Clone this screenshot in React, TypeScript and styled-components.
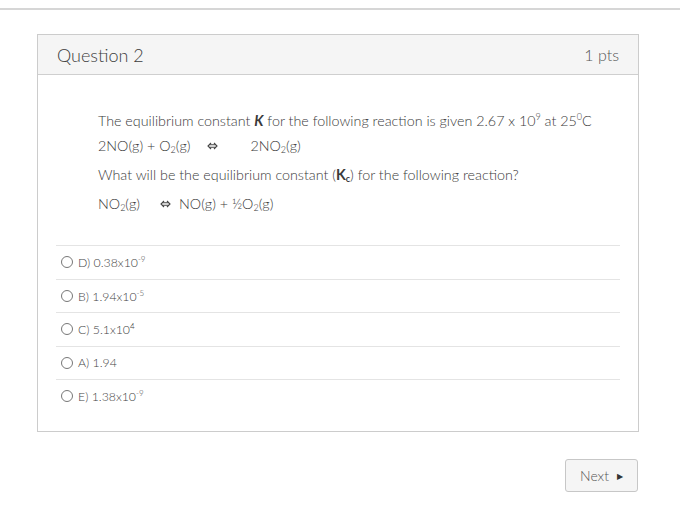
import React from "react";
import styled, { createGlobalStyle } from "styled-components";

const Global = createGlobalStyle`
  html, body { margin: 0; padding: 0; background: #fff; }
  body { font-family: Lato, "Open Sans", "Liberation Sans", sans-serif; color: #333; }
`;

const Page = styled.div`
  width: 700px;
  height: 512px;
  overflow: hidden;
  display: flex;
  flex-direction: column;
`;

const TopRule = styled.div`
  margin-top: 8px;
  width: 680px;
  height: 2px;
  background: #d6d6d6;
`;

const Card = styled.div`
  margin: 24px 0 0 37px;
  width: 600px;
  height: 396px;
  border: 1px solid #cccccc;
  display: flex;
  flex-direction: column;
`;

const Header = styled.div`
  height: 39px;
  background: #f5f5f5;
  border-bottom: 1px solid #cfcfcf;
  display: flex;
  align-items: center;
  justify-content: space-between;
  padding: 0 19px 0 19px;
`;

const Title = styled.span`
  font-size: 18px;
  font-weight: 300;
  color: #3d3d3d;
`;

const Points = styled.span`
  font-size: 16px;
  font-weight: 300;
  color: #555;
`;

const Body = styled.div`
  padding: 27px 0 0 60px;
  display: flex;
  flex-direction: column;
`;

const Line = styled.div`
  font-size: 14.3px;
  font-weight: 300;
  color: #3a3a3a;
  height: 29px;
  line-height: 29px;
  white-space: nowrap;
`;

const Gap = styled.span<{ $w: number }>`
  display: inline-block;
  width: ${(p) => p.$w}px;
`;

const Sub = styled.sub`
  font-size: 9px;
  vertical-align: -2px;
`;

const Sup = styled.sup`
  font-size: 9px;
  vertical-align: 6px;
`;

const Strong = styled.b`
  font-weight: 700;
`;

const ArrowSvg = styled.svg`
  display: inline-block;
  vertical-align: 1px;
`;

const Arrow = () => (
  <ArrowSvg width="11" height="8" viewBox="0 0 11 8" fill="none" stroke="#444" strokeWidth="1.1">
    <path d="M4 1 L1 4 L4 7" />
    <path d="M7 1 L10 4 L7 7" />
    <path d="M2.5 2.8 H8.5 M2.5 5.2 H8.5" />
  </ArrowSvg>
);

const Answers = styled.div`
  margin: 27px 18px 0 18px;
  display: flex;
  flex-direction: column;
`;

const Answer = styled.label`
  box-sizing: border-box;
  height: 33.5px;
  border-top: 1px solid #e4e4e4;
  display: flex;
  align-items: center;
  gap: 5px;
  padding-left: 5px;
  font-size: 12.3px;
  font-weight: 300;
  color: #444;
`;

const Radio = styled.span`
  width: 10px;
  height: 10px;
  border: 1.3px solid #777;
  border-radius: 50%;
  flex: none;
`;

const SmallSup = styled.sup`
  font-size: 8px;
  vertical-align: 5px;
`;

const Footer = styled.div`
  width: 638px;
  display: flex;
  justify-content: flex-end;
  margin-top: 27px;
`;

const NextButton = styled.button`
  width: 73px;
  height: 33px;
  background: #f5f5f5;
  border: 1px solid #c7c7c7;
  border-radius: 3px;
  font-family: Lato, "Open Sans", "Liberation Sans", sans-serif;
  font-size: 14px;
  font-weight: 300;
  color: #555;
  display: flex;
  align-items: center;
  justify-content: center;
  gap: 8px;
  padding: 0;
`;

const Tri = styled.span`
  font-size: 8px;
  color: #333;
`;

const answers: React.ReactNode[] = [
  <>D) 0.38x10<SmallSup>-9</SmallSup></>,
  <>B) 1.94x10<SmallSup>-5</SmallSup></>,
  <>C) 5.1x10<SmallSup>4</SmallSup></>,
  <>A) 1.94</>,
  <>E) 1.38x10<SmallSup>-9</SmallSup></>,
];

export default function App() {
  return (
    <Page>
      <Global />
      <TopRule />
      <Card>
        <Header>
          <Title>Question 2</Title>
          <Points>1 pts</Points>
        </Header>
        <Body>
          <Line>
            The equilibrium constant <Strong><i>K</i></Strong> for the following reaction is given 2.67 x 10<Sup>9</Sup> at 25<Sup>0</Sup>C
          </Line>
          <Line>
            2NO(g) + O<Sub>2</Sub>(g)<Gap $w={17} /><Arrow /><Gap $w={32} />2NO<Sub>2</Sub>(g)
          </Line>
          <Line>
            What will be the equilibrium constant (<Strong>K</Strong><Sub><Strong>c</Strong></Sub>) for the following reaction?
          </Line>
          <Line>
            NO<Sub>2</Sub>(g)<Gap $w={20} /><Arrow /><Gap $w={8} />NO(g) + ½O<Sub>2</Sub>(g)
          </Line>
        </Body>
        <Answers>
          {answers.map((a, i) => (
            <Answer key={i}>
              <Radio />
              <span>{a}</span>
            </Answer>
          ))}
        </Answers>
      </Card>
      <Footer>
        <NextButton>
          Next <Tri>▶</Tri>
        </NextButton>
      </Footer>
    </Page>
  );
}
